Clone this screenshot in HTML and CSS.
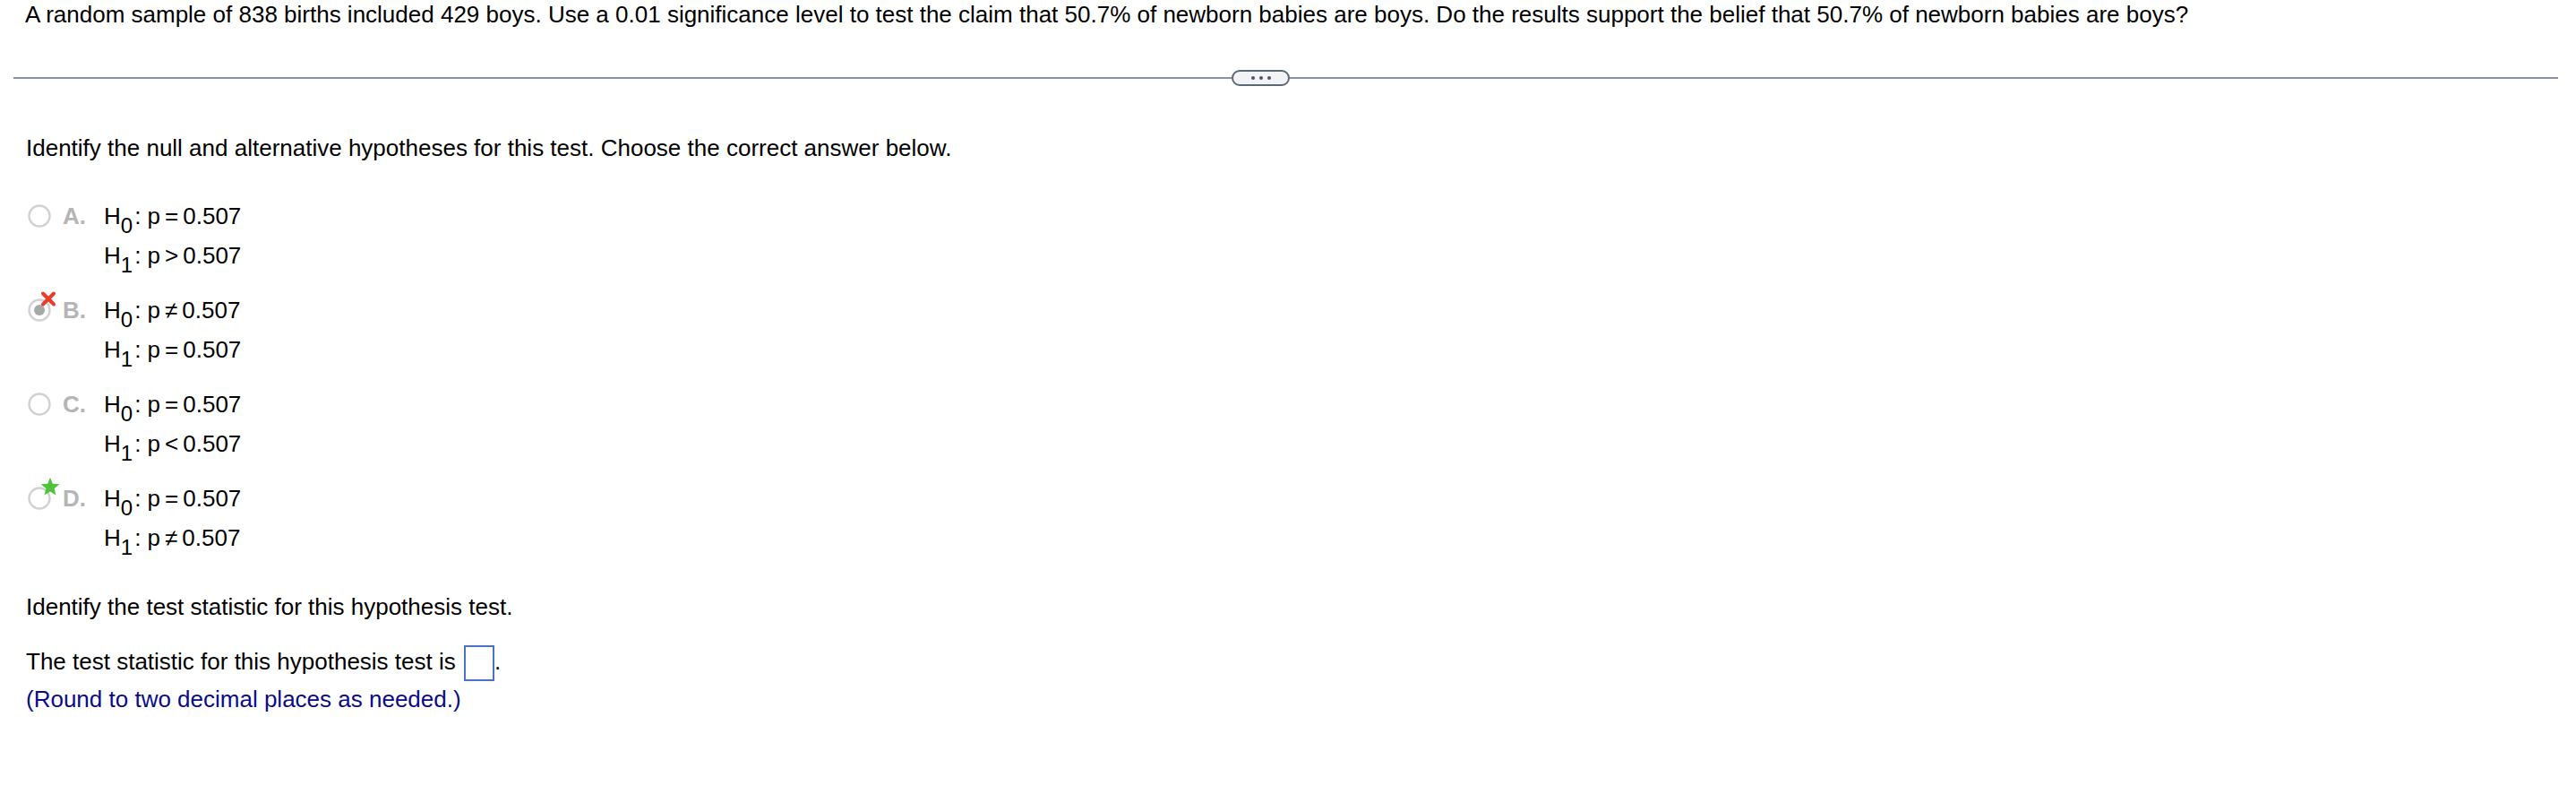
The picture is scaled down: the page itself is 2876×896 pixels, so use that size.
FILE: index.html
```html
<!DOCTYPE html>
<html lang="en">
<head>
<meta charset="utf-8">
<title>Hypothesis test</title>
<link rel="stylesheet" href="styles.css">
</head>
<body>
<div class="page">
  <p class="question">A random sample of 838 births included 429 boys. Use a 0.01 significance level to test the claim that 50.7% of newborn babies are boys. Do the results support the belief that 50.7% of newborn babies are boys?</p>

  <div class="divider">
    <span class="rule left"></span>
    <span class="more"><span class="dot"></span><span class="dot"></span><span class="dot"></span></span>
    <span class="rule right"></span>
  </div>

  <div class="work">
    <p class="prompt">Identify the null and alternative hypotheses for this test. Choose the correct answer below.</p>

    <ul class="choices">
      <li class="choice">
        <span class="mark">
          <svg class="radio" width="28" height="28" viewBox="0 0 28 28"><circle cx="14" cy="14" r="11.5" fill="#fff" stroke="#d2d2d2" stroke-width="2.4"/></svg>
        </span>
        <span class="letter">A.</span>
        <div class="hyp">
          <div class="line">H<sub>0</sub>: p<span class="op">=</span>0.507</div>
          <div class="line">H<sub>1</sub>: p<span class="op">&gt;</span>0.507</div>
        </div>
      </li>
      <li class="choice">
        <span class="mark">
          <svg class="radio" width="28" height="28" viewBox="0 0 28 28"><circle cx="14" cy="14" r="11.5" fill="#fff" stroke="#d2d2d2" stroke-width="2.4"/><circle cx="14" cy="14" r="6" fill="#a8a8a8"/></svg>
          <svg class="badge" width="20" height="20" viewBox="0 0 20 20"><path d="M4 3.5 L16 15.5 M16 3.5 L4 15.5" stroke="#ee3b26" stroke-width="4" stroke-linecap="round"/></svg>
        </span>
        <span class="letter">B.</span>
        <div class="hyp">
          <div class="line">H<sub>0</sub>: p<span class="op">&ne;</span>0.507</div>
          <div class="line">H<sub>1</sub>: p<span class="op">=</span>0.507</div>
        </div>
      </li>
      <li class="choice">
        <span class="mark">
          <svg class="radio" width="28" height="28" viewBox="0 0 28 28"><circle cx="14" cy="14" r="11.5" fill="#fff" stroke="#d2d2d2" stroke-width="2.4"/></svg>
        </span>
        <span class="letter">C.</span>
        <div class="hyp">
          <div class="line">H<sub>0</sub>: p<span class="op">=</span>0.507</div>
          <div class="line">H<sub>1</sub>: p<span class="op">&lt;</span>0.507</div>
        </div>
      </li>
      <li class="choice">
        <span class="mark">
          <svg class="radio" width="28" height="28" viewBox="0 0 28 28"><circle cx="14" cy="14" r="11.5" fill="#fff" stroke="#d2d2d2" stroke-width="2.4"/></svg>
          <svg class="badge star" width="24" height="24" viewBox="0 0 22 22"><path d="M11 1.5 L13.6 8 L20.6 8.4 L15.2 12.9 L17 19.8 L11 16 L5 19.8 L6.8 12.9 L1.4 8.4 L8.4 8 Z" fill="#4fc43a"/></svg>
        </span>
        <span class="letter">D.</span>
        <div class="hyp">
          <div class="line">H<sub>0</sub>: p<span class="op">=</span>0.507</div>
          <div class="line">H<sub>1</sub>: p<span class="op">&ne;</span>0.507</div>
        </div>
      </li>
    </ul>

    <p class="prompt second">Identify the test statistic for this hypothesis test.</p>

    <p class="answer">The test statistic for this hypothesis test is <span class="input"></span>.<br>
      <span class="hint">(Round to two decimal places as needed.)</span></p>
  </div>
</div>
</body>
</html>
```

FILE: styles.css
```css
html, body {
  margin: 0;
  padding: 0;
  background: #ffffff;
}

body {
  font-family: "Liberation Sans", Arial, Helvetica, sans-serif;
  color: #000;
}

.page {
  padding: 0 20px 0 15px;
}

.question {
  margin: 0;
  padding-left: 13px;
  font-size: 26px;
  line-height: 33px;
  white-space: nowrap;
}

.divider {
  display: flex;
  align-items: center;
  margin-top: 45px;
  height: 18px;
}

.rule {
  height: 2px;
  background: #8b93a2;
}

.rule.left {
  flex: 1360 1 0;
}

.rule.right {
  flex: 1416 1 0;
}

.more {
  display: flex;
  align-items: center;
  justify-content: center;
  gap: 5px;
  width: 61px;
  height: 14px;
  border: 2px solid #5d6877;
  border-radius: 9px;
  background: #f2f3f6;
  flex: none;
}

.dot {
  width: 4px;
  height: 4px;
  border-radius: 50%;
  background: #4d5562;
}

.work {
  padding-left: 14px;
  font-size: 26px;
}

.prompt {
  margin: 54px 0 0 0;
  line-height: 30px;
}

.choices {
  list-style: none;
  margin: 39px 0 0 0;
  padding: 0;
}

.choice {
  display: flex;
  align-items: flex-start;
  margin-bottom: 17px;
}

.mark {
  position: relative;
  width: 28px;
  height: 28px;
  margin-top: 8px;
  margin-left: 1px;
  flex: none;
}

.radio {
  display: block;
}

.badge {
  position: absolute;
  left: 14px;
  top: -8px;
}

.badge.star {
  left: 14px;
  top: -11px;
}

.letter {
  margin-left: 12px;
  width: 46px;
  font-weight: bold;
  color: #b5b5b5;
  line-height: 44px;
  flex: none;
}

.hyp {
  line-height: 44px;
}

.line {
  white-space: nowrap;
}

.line sub {
  font-size: 24px;
  vertical-align: -10px;
  line-height: 0;
  margin-right: 2px;
}

.op {
  margin: 0 5px;
}

.second {
  margin-top: 40px;
}

.answer {
  margin: 26px 0 0 0;
  line-height: 41px;
}

.input {
  display: inline-block;
  width: 30px;
  height: 36px;
  border: 2px solid #4a74c9;
  vertical-align: middle;
  margin-left: 2px;
}

.hint {
  color: #0b0b88;
}
```
